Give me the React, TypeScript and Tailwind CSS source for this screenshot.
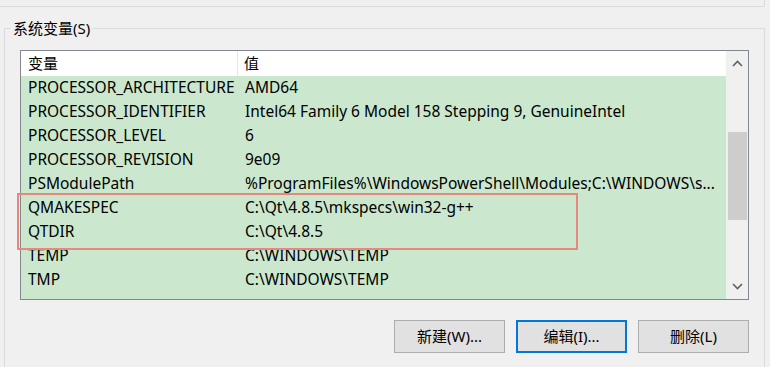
import React from "react";

type EnvVar = { name: string; value: string };

const vars: EnvVar[] = [
  { name: "PROCESSOR_ARCHITECTURE", value: "AMD64" },
  { name: "PROCESSOR_IDENTIFIER", value: "Intel64 Family 6 Model 158 Stepping 9, GenuineIntel" },
  { name: "PROCESSOR_LEVEL", value: "6" },
  { name: "PROCESSOR_REVISION", value: "9e09" },
  { name: "PSModulePath", value: "%ProgramFiles%\\WindowsPowerShell\\Modules;C:\\WINDOWS\\s..." },
  { name: "QMAKESPEC", value: "C:\\Qt\\4.8.5\\mkspecs\\win32-g++" },
  { name: "QTDIR", value: "C:\\Qt\\4.8.5" },
  { name: "TEMP", value: "C:\\WINDOWS\\TEMP" },
  { name: "TMP", value: "C:\\WINDOWS\\TEMP" },
];

const Chevron = ({ down }: { down?: boolean }) => (
  <svg width="11" height="7" viewBox="0 0 11 7" className={down ? "rotate-180" : ""}>
    <path d="M1 6 L5.5 1.5 L10 6" fill="none" stroke="#606060" strokeWidth="1.6" />
  </svg>
);

const Button = ({ label, focused }: { label: string; focused?: boolean }) => (
  <button
    className={
      "w-[111px] h-[33px] bg-[#e1e1e1] text-[15px] text-black flex items-center justify-center " +
      (focused ? "border-2 border-[#0078d7]" : "border border-[#adadad]")
    }
  >
    {label}
  </button>
);

export default function App() {
  return (
    <div
      className="relative w-[770px] h-[367px] bg-[#f0f0f0] overflow-hidden text-black"
      style={{ fontFamily: '"Noto Sans", "Noto Sans CJK SC", sans-serif' }}
    >
      {/* bottom edge of the group above */}
      <div className="h-[7px] mr-[5px] border-b border-r border-[#dcdcdc]" />

      <fieldset className="ml-[4px] mr-[5px] mt-[12px] border border-[#dcdcdc] pl-[15px] pb-[20px] h-[400px]">
        <legend className="ml-[-9px] px-[2px] text-[15px] leading-[18px]">系统变量(S)</legend>

        <div className="mt-[13px] w-[729px] h-[250px] border border-[#828790] flex bg-[#cbe8cf]">
          <div className="flex-1 flex flex-col text-[15.5px]">
            <div className="h-[25px] flex bg-white shrink-0 text-[15px]">
              <div className="w-[217px] pl-[7px] flex items-center border-r border-[#e5e5e5]">变量</div>
              <div className="pl-[6px] flex items-center">值</div>
            </div>
            {vars.map((v) => (
              <div key={v.name} className="h-[24px] flex items-center shrink-0">
                <div className="w-[218px] pl-[7px] whitespace-nowrap">{v.name}</div>
                <div className="pl-[6px] whitespace-nowrap">{v.value}</div>
              </div>
            ))}
          </div>
          <div className="w-[22px] bg-[#f0f0f0] border-l border-[#e8f4ea] flex flex-col items-center">
            <div className="h-[25px] flex items-center justify-center">
              <Chevron />
            </div>
            <div className="h-[56px]" />
            <div className="w-[19px] h-[88px] bg-[#cdcdcd]" />
            <div className="flex-1" />
            <div className="h-[25px] flex items-center justify-center">
              <Chevron down />
            </div>
          </div>
        </div>

        <div className="w-[729px] mt-[20px] flex justify-end gap-[11px]">
          <Button label="新建(W)..." />
          <Button label="编辑(I)..." focused />
          <Button label="删除(L)" />
        </div>
      </fieldset>

      {/* annotation box */}
      <div className="absolute left-[17px] top-[193px] w-[561px] h-[57px] border-2 border-[#e8887d]" />
    </div>
  );
}
